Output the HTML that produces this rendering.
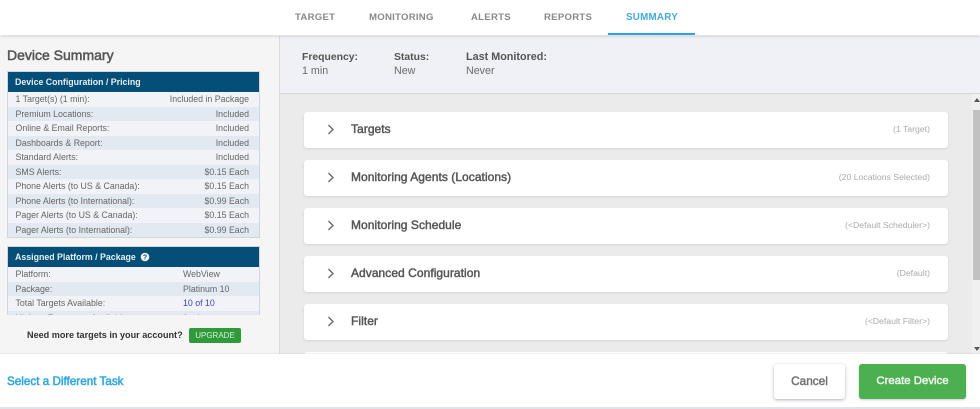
<!DOCTYPE html>
<html><head><meta charset="utf-8"><style>
*{box-sizing:border-box}
html,body{margin:0;padding:0}
body{width:980px;height:409px;overflow:hidden;position:relative;background:#fff;font-family:"Liberation Sans",sans-serif}
.a{position:absolute;white-space:nowrap}
.tab{top:11px;font-size:9.6px;line-height:13px;font-weight:bold;color:#888;letter-spacing:.25px}
.tb{position:absolute;left:7px;width:253px;background:#f1f3f8;border:1px solid #cfd6e0}
.th{position:absolute;left:0;right:0;background:#034f78;color:#e8eef3;font-size:8.8px;font-weight:bold;line-height:20px;padding-left:7px}
.r{position:absolute;left:0;right:0;height:14.5px;line-height:14.5px;font-size:8.8px;color:#666;padding:0 10px 0 7.5px}
.r.e{background:#e2e9f1}
.r b{position:absolute;right:10px;top:0;font-weight:normal}
.r i{position:absolute;left:175px;top:0;font-style:normal}
.card{position:absolute;left:304px;width:644px;height:36px;background:#fff;border-radius:3px;box-shadow:0 1px 2px rgba(0,0,0,.1)}
.card svg{position:absolute;left:22px;top:11px}
.card span{position:absolute;left:47px;top:0;line-height:35px;font-size:12px;-webkit-text-stroke:.45px #555;letter-spacing:.05px;color:#555}
.card em{position:absolute;right:18px;top:0;line-height:35px;font-size:8.7px;font-style:normal;color:#aaa}
.lb{font-size:10.4px;font-weight:bold;color:#555;line-height:13px;top:51px}
.vl{font-size:10.7px;color:#6a6a6a;line-height:13px;top:65px}
</style></head><body>
<div class="a" style="left:0;top:36px;width:280px;height:318px;background:#f5f5f5;border-right:1px solid #ddd"></div>
<div class="a" style="left:280px;top:36px;width:700px;height:58px;background:#eff1f7;border-bottom:1px solid #d8d8d8"></div>
<div class="a" style="left:280px;top:94px;width:700px;height:260px;background:#ebebeb"></div>
<div class="a" style="left:0;top:0;width:980px;height:35px;background:#fff;box-shadow:0 1px 3px rgba(0,0,0,.18)"></div>
<div class="a tab" style="left:295px">TARGET</div>
<div class="a tab" style="left:369px">MONITORING</div>
<div class="a tab" style="left:471px">ALERTS</div>
<div class="a tab" style="left:544px">REPORTS</div>
<div class="a tab" style="left:626px;font-size:9.8px;color:#42a8e6">SUMMARY</div>
<div class="a" style="left:608px;top:33px;width:87px;height:2px;background:#29a3e8"></div>

<div class="a" style="left:7px;top:46px;font-size:14px;line-height:18px;-webkit-text-stroke:.5px #555;color:#555">Device Summary</div>
<div class="tb" style="top:71px;height:167px">
<div class="th" style="top:0;height:20px">Device Configuration / Pricing</div>
<div class="r" style="top:20px">1 Target(s) (1 min):<b>Included in Package</b></div>
<div class="r e" style="top:34.5px">Premium Locations:<b>Included</b></div>
<div class="r" style="top:49px">Online &amp; Email Reports:<b>Included</b></div>
<div class="r e" style="top:63.5px">Dashboards &amp; Report:<b>Included</b></div>
<div class="r" style="top:78px">Standard Alerts:<b>Included</b></div>
<div class="r e" style="top:92.5px">SMS Alerts:<b>$0.15 Each</b></div>
<div class="r" style="top:107px">Phone Alerts (to US &amp; Canada):<b>$0.15 Each</b></div>
<div class="r e" style="top:121.5px">Phone Alerts (to International):<b>$0.99 Each</b></div>
<div class="r" style="top:136px">Pager Alerts (to US &amp; Canada):<b>$0.15 Each</b></div>
<div class="r e" style="top:150.5px">Pager Alerts (to International):<b>$0.99 Each</b></div>
</div>
<div class="tb" style="top:246px;height:69px;overflow:hidden;border-bottom:0">
<div class="th" style="top:0;height:20px">Assigned Platform / Package
<svg style="position:absolute;left:132px;top:5px" width="10" height="10" viewBox="0 0 10 10"><circle cx="5" cy="5" r="4.3" fill="#f2f5f7"/><text x="5" y="7.6" font-size="7" font-weight="bold" text-anchor="middle" fill="#034f78" font-family="Liberation Sans">?</text></svg></div>
<div class="r" style="top:20px">Platform:<i>WebView</i></div>
<div class="r e" style="top:34.5px">Package:<i>Platinum 10</i></div>
<div class="r" style="top:49px">Total Targets Available:<i style="color:#3c3fd0">10 of 10</i></div>
<div class="r e" style="top:63.5px">Highest Frequency Available:<i>1 min</i></div>
</div>
<div class="a" style="left:27px;top:329px;font-size:9.1px;line-height:13px;font-weight:bold;color:#333">Need more targets in your account?</div>
<div class="a" style="left:189px;top:328px;width:52px;height:15px;background:#2f9a3a;border-radius:2px;color:#d6efd8;font-size:8px;line-height:15px;text-align:center">UPGRADE</div>

<div class="a lb" style="left:302px">Frequency:</div><div class="a vl" style="left:302px">1 min</div>
<div class="a lb" style="left:394px">Status:</div><div class="a vl" style="left:394px">New</div>
<div class="a lb" style="left:466px;font-size:10.8px">Last Monitored:</div><div class="a vl" style="left:466px">Never</div>

<div class="card" style="top:112px"><svg width="10" height="13" viewBox="0 0 10 13"><path d="M2.5 2l4.5 4.5-4.5 4.5" fill="none" stroke="#666" stroke-width="1.3"/></svg><span>Targets</span><em>(1 Target)</em></div>
<div class="card" style="top:160px"><svg width="10" height="13" viewBox="0 0 10 13"><path d="M2.5 2l4.5 4.5-4.5 4.5" fill="none" stroke="#666" stroke-width="1.3"/></svg><span>Monitoring Agents (Locations)</span><em>(20 Locations Selected)</em></div>
<div class="card" style="top:208px"><svg width="10" height="13" viewBox="0 0 10 13"><path d="M2.5 2l4.5 4.5-4.5 4.5" fill="none" stroke="#666" stroke-width="1.3"/></svg><span>Monitoring Schedule</span><em>(&lt;Default Scheduler&gt;)</em></div>
<div class="card" style="top:256px"><svg width="10" height="13" viewBox="0 0 10 13"><path d="M2.5 2l4.5 4.5-4.5 4.5" fill="none" stroke="#666" stroke-width="1.3"/></svg><span>Advanced Configuration</span><em>(Default)</em></div>
<div class="card" style="top:304px"><svg width="10" height="13" viewBox="0 0 10 13"><path d="M2.5 2l4.5 4.5-4.5 4.5" fill="none" stroke="#666" stroke-width="1.3"/></svg><span>Filter</span><em>(&lt;Default Filter&gt;)</em></div>
<div class="card" style="top:352px"></div>

<div class="a" style="left:972px;top:94px;width:8px;height:260px;background:#f0f0f0"></div>
<div class="a" style="left:973px;top:110px;width:7px;height:170px;background:#c1c1c1"></div>
<svg class="a" style="left:974px;top:98px" width="6" height="4"><path d="M0 4L3 0l3 4z" fill="#555"/></svg>
<svg class="a" style="left:974px;top:347px" width="6" height="4"><path d="M0 0l3 4 3-4z" fill="#555"/></svg>

<div class="a" style="left:0;top:354px;width:980px;height:53px;background:#fff;box-shadow:0 -1px 1px rgba(0,0,0,.06)"></div>
<div class="a" style="left:0;top:407px;width:980px;height:2px;background:#dfe3ee"></div>
<div class="a" style="left:7px;top:374px;font-size:11.7px;line-height:16px;-webkit-text-stroke:.5px #2ba6e6;color:#2ba6e6">Select a Different Task</div>
<div class="a" style="left:774px;top:364px;width:71px;height:35px;background:#fff;border-radius:3px;box-shadow:0 1px 3px rgba(0,0,0,.3);font-size:11.8px;-webkit-text-stroke:.45px #707070;line-height:35px;text-align:center;color:#707070">Cancel</div>
<div class="a" style="left:859px;top:364px;width:107px;height:35px;background:#4caf50;border-radius:3px;box-shadow:0 1px 2px rgba(0,0,0,.2);font-size:11.4px;-webkit-text-stroke:.5px #eef8ef;line-height:35px;text-align:center;color:#eef8ef">Create Device</div>
</body></html>
